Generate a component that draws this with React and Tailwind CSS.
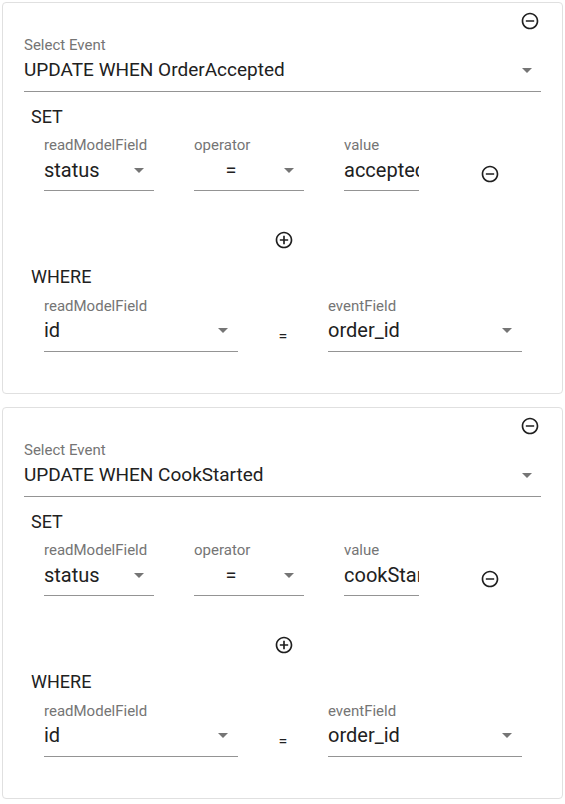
import React from "react";

const RemoveIcon = ({ className = "" }) => (
  <svg viewBox="0 0 24 24" className={className} fill="currentColor">
    <path d="M7 11v2h10v-2H7zm5-9C6.48 2 2 6.48 2 12s4.48 10 10 10 10-4.48 10-10S17.52 2 12 2zm0 18c-4.41 0-8-3.59-8-8s3.59-8 8-8 8 3.59 8 8-3.59 8-8 8z" />
  </svg>
);

const AddIcon = ({ className = "" }) => (
  <svg viewBox="0 0 24 24" className={className} fill="currentColor">
    <path d="M13 7h-2v4H7v2h4v4h2v-4h4v-2h-4V7zm-1-5C6.48 2 2 6.48 2 12s4.48 10 10 10 10-4.48 10-10S17.52 2 12 2zm0 18c-4.41 0-8-3.59-8-8s3.59-8 8-8 8 3.59 8 8-3.59 8-8 8z" />
  </svg>
);

const Arrow = () => (
  <svg viewBox="0 0 10 5" className="w-[10px] h-[5px] text-[#757575]" fill="currentColor">
    <path d="M0 0 L10 0 L5 5 Z" />
  </svg>
);

function Field({ label, value, width, arrow = true, center = false, tall = false }) {
  return (
    <div className={`flex flex-col ${width}`}>
      <div className="h-[18px] text-[15px] leading-[18px] text-[#757575] whitespace-nowrap">{label}</div>
      <div className="relative h-[37px] border-b border-[#949494] overflow-hidden">
        <div
          className={`absolute left-0 text-[20px] leading-[24px] text-[#212121] whitespace-nowrap ${
            tall ? "top-[3px]" : "top-[4px]"
          } ${center ? "w-[74px] text-center" : ""}`}
        >
          {value}
        </div>
        {arrow && (
          <div className={`absolute right-[10px] ${tall ? "top-[13px]" : "top-[14px]"}`}>
            <Arrow />
          </div>
        )}
      </div>
    </div>
  );
}

function Card({ event, value }) {
  return (
    <div className="mx-[2px] w-[561px] h-[392px] border border-[#e0e0e0] rounded-[4px] bg-white">
      <div className="flex justify-end pt-[8px] pr-[22px]">
        <RemoveIcon className="w-[20px] h-[20px] text-[#1f1f1f]" />
      </div>
      <div className="mx-[21px] mt-[5px]">
        <div className="h-[18px] text-[15px] leading-[18px] text-[#757575]">Select Event</div>
        <div className="relative h-[38px] border-b border-[#949494]">
          <div className="absolute left-0 top-[4px] text-[19px] leading-[24px] text-[#212121] whitespace-nowrap">
            {event}
          </div>
          <div className="absolute right-[9px] top-[14px]">
            <Arrow />
          </div>
        </div>
      </div>
      <div className="ml-[28px] mt-[13px] text-[18px] leading-[24px] text-[#212121]">SET</div>
      <div className="flex items-start ml-[41px] mt-[7px]">
        <Field label="readModelField" value="status" width="w-[110px]" />
        <div className="w-[40px] shrink-0" />
        <Field label="operator" value="=" width="w-[110px]" center />
        <div className="w-[40px] shrink-0" />
        <Field label="value" value={value} width="w-[75px]" arrow={false} />
        <div className="ml-[61px] mt-[28px]">
          <RemoveIcon className="w-[20px] h-[20px] text-[#1f1f1f]" />
        </div>
      </div>
      <div className="flex justify-center mt-[39px] pl-[2px]">
        <AddIcon className="w-[20px] h-[20px] text-[#1f1f1f]" />
      </div>
      <div className="ml-[28px] mt-[15px] text-[18px] leading-[24px] text-[#212121]">WHERE</div>
      <div className="flex items-start ml-[41px] mt-[8px]">
        <Field label="readModelField" value="id" width="w-[194px]" tall />
        <div className="w-[90px] shrink-0 flex justify-center pt-[28px] text-[16px] leading-[24px] text-[#212121]">=</div>
        <Field label="eventField" value="order_id" width="w-[194px]" tall />
      </div>
    </div>
  );
}

export default function App() {
  return (
    <div className="w-[565px] h-[804px] bg-white pt-[2px]" style={{ fontFamily: "Roboto, sans-serif" }}>
      <Card event="UPDATE WHEN OrderAccepted" value="accepted" />
      <div className="h-[13px]" />
      <Card event="UPDATE WHEN CookStarted" value="cookStarted" />
    </div>
  );
}
